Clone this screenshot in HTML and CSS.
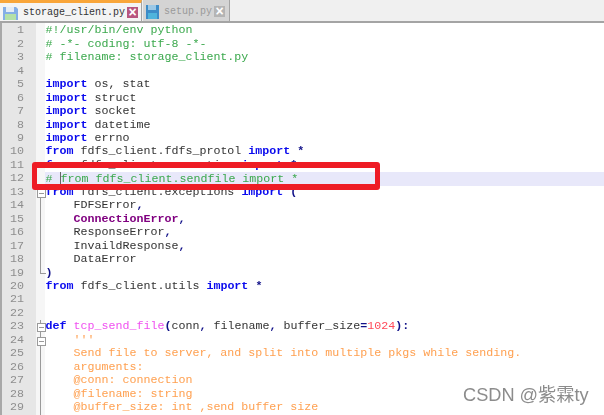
FILE: index.html
```html
<!DOCTYPE html>
<html lang="en">
<head>
<meta charset="utf-8">
<title>storage_client.py</title>
<link rel="stylesheet" href="styles.css">
</head>
<body>
<div class="window">
  <div class="tabs">
    <div class="tab active">
      <svg class="disk" viewBox="0 0 15 14"><path d="M0 1h13l2 2v11H0z" fill="#84aee6"/><rect x="3" y="1" width="8" height="5" fill="#e4ecf6"/><rect x="2" y="8" width="11" height="6" fill="#b4e0a8"/></svg>
      <span class="name">storage_client.py</span>
      <span class="close">×</span>
    </div>
    <div class="tab">
      <svg class="disk" viewBox="0 0 13 14"><path d="M0 0h13v14H0z" fill="#3d8cc8"/><rect x="2" y="0" width="8" height="5" fill="#9cc8e6"/><rect x="2" y="8" width="9" height="6" fill="#4fb4dc"/></svg>
      <span class="name">setup.py</span>
      <span class="close">×</span>
    </div>
  </div>
  <div class="editor">
    <div class="gutter">
      <span>1</span><span>2</span><span>3</span><span>4</span><span>5</span><span>6</span><span>7</span><span>8</span><span>9</span><span>10</span><span>11</span><span>12</span><span>13</span><span>14</span><span>15</span><span>16</span><span>17</span><span>18</span><span>19</span><span>20</span><span>21</span><span>22</span><span>23</span><span>24</span><span>25</span><span>26</span><span>27</span><span>28</span><span>29</span>
    </div>
    <div class="fold">
      <i></i><i></i><i></i><i></i><i></i><i></i><i></i><i></i><i></i><i></i><i></i><i></i>
      <i class="box"></i><i class="line"></i><i class="line"></i><i class="line"></i><i class="line"></i><i class="line"></i><i class="end"></i>
      <i></i><i></i><i></i>
      <i class="box"></i><i class="box"></i><i class="line"></i><i class="line"></i><i class="line"></i><i class="line"></i><i class="line"></i>
    </div>
    <div class="code">
      <div class="c">#!/usr/bin/env python</div>
      <div class="c"># -*- coding: utf-8 -*-</div>
      <div class="c"># filename: storage_client.py</div>
      <div></div>
      <div><b class="k">import</b> os, stat</div>
      <div><b class="k">import</b> struct</div>
      <div><b class="k">import</b> socket</div>
      <div><b class="k">import</b> datetime</div>
      <div><b class="k">import</b> errno</div>
      <div><b class="k">from</b> fdfs_client.fdfs_protol <b class="k">import</b> <b class="o">*</b></div>
      <div><b class="k">from</b> fdfs_client.connection <b class="k">import</b> <b class="o">*</b></div>
      <div class="c current"># <i class="caret"></i>from fdfs_client.sendfile import *</div>
      <div><b class="k">from</b> fdfs_client.exceptions <b class="k">import</b> <b class="o">(</b></div>
      <div>    FDFSError<b class="o">,</b></div>
      <div>    <b class="p">ConnectionError</b><b class="o">,</b></div>
      <div>    ResponseError<b class="o">,</b></div>
      <div>    InvaildResponse<b class="o">,</b></div>
      <div>    DataError</div>
      <div><b class="o">)</b></div>
      <div><b class="k">from</b> fdfs_client.utils <b class="k">import</b> <b class="o">*</b></div>
      <div></div>
      <div></div>
      <div><b class="k">def</b> <span class="f">tcp_send_file</span><b class="o">(</b>conn<b class="o">,</b> filename<b class="o">,</b> buffer_size<b class="o">=</b><span class="n">1024</span><b class="o">):</b></div>
      <div class="s">    '''</div>
      <div class="s">    Send file to server, and split into multiple pkgs while sending.</div>
      <div class="s">    arguments:</div>
      <div class="s">    @conn: connection</div>
      <div class="s">    @filename: string</div>
      <div class="s">    @buffer_size: int ,send buffer size</div>
    </div>
    <div class="marker"></div>
    <div class="watermark">CSDN @紫霖ty</div>
  </div>
</div>
</body>
</html>
```
FILE: styles.css
```css
* { box-sizing: border-box; }
html, body { margin: 0; height: 100%; overflow: hidden; background: #fff; }
.window { width: 604px; height: 415px; display: flex; flex-direction: column; overflow: hidden; filter: blur(0.3px); }
.tabs { height: 23px; flex: none; display: flex; align-items: flex-start; background: #f0f0f0; border-bottom: 2px solid #a4a4a4; font: 10px "Liberation Mono", monospace; }
.tab { height: 21px; width: 87px; margin-left: 1px; display: flex; align-items: center; padding: 2px 4px 0 3px; background: #d4d4d4; color: #9a9a9a; border-right: 1px solid #a4a4a4; }
.tab.active { width: 142px; margin-left: 0; padding: 1px 3px 0 3px; background: #f4f4f4; color: #333; border-top: 3px solid #f9a63a; border-right: 1px solid #a4a4a4; }
.disk { width: 15px; height: 14px; flex: none; margin-right: 5px; }
.tab:not(.active) .disk { width: 13px; margin-right: 5px; }
.name { flex: 1; white-space: nowrap; }
.close { width: 11px; height: 11px; flex: none; background: #b4b4b4; color: #fff; font: bold 14px/11px "Liberation Sans", sans-serif; text-align: center; }
.active .close { background: #b8557f; }
.editor { flex: 1; display: flex; position: relative; overflow: hidden; }
.gutter { width: 36px; flex: none; padding-top: 1.4px; background: #e6e6e6; border-left: 2px solid #a8a8a8; display: flex; flex-direction: column; font: 11.67px/13.46px "Liberation Mono", monospace; color: #8e8e8e; }
.gutter span { display: block; height: 13.46px; flex: none; text-align: right; padding-right: 12px; }
.fold { width: 9px; flex: none; padding-top: 1.4px; background: #f6f6f6; display: flex; flex-direction: column; }
.fold i { display: block; height: 13.46px; flex: none; position: relative; }
.fold .line::before, .fold .box::before, .fold .end::before { content: ""; position: absolute; left: 4px; top: 0; bottom: 0; border-left: 1px solid #9a9a9a; }
.fold .end::before { bottom: 6px; width: 5px; border-bottom: 1px solid #9a9a9a; }
.fold .box::after { content: ""; position: absolute; left: 1px; top: 3px; width: 7px; height: 7px; border: 1px solid #9a9a9a; background: linear-gradient(#9a9a9a, #9a9a9a) center / 5px 1px no-repeat, #fff; }
.code { flex: 1; padding-top: 1.4px; font: 11.67px/13.46px "Liberation Mono", monospace; color: #333; }
.code > div { height: 13.46px; white-space: pre; padding-left: 0.5px; }
.k { color: #0a0aee; }
.o { color: #101088; }
.c { color: #3aa84c; }
.s { color: #ffa050; }
.f { color: #f050f0; }
.n { color: #ff4858; }
.p { color: #800080; }
.code .current { background: #e8e8fa; }
.caret { display: inline-block; width: 0; height: 12px; border-left: 1px solid #666; vertical-align: -2px; }
.marker { position: absolute; left: 32px; top: 139px; width: 348px; height: 28px; border: 6px solid #ee1c25; border-left-width: 5px; border-right-width: 5px; border-bottom-width: 6px; border-radius: 3px; }
.watermark { position: absolute; left: 463px; top: 362px; font: 18.2px/20px "Liberation Sans", "Noto Sans CJK SC", sans-serif; color: #8c8c8c; }
```
